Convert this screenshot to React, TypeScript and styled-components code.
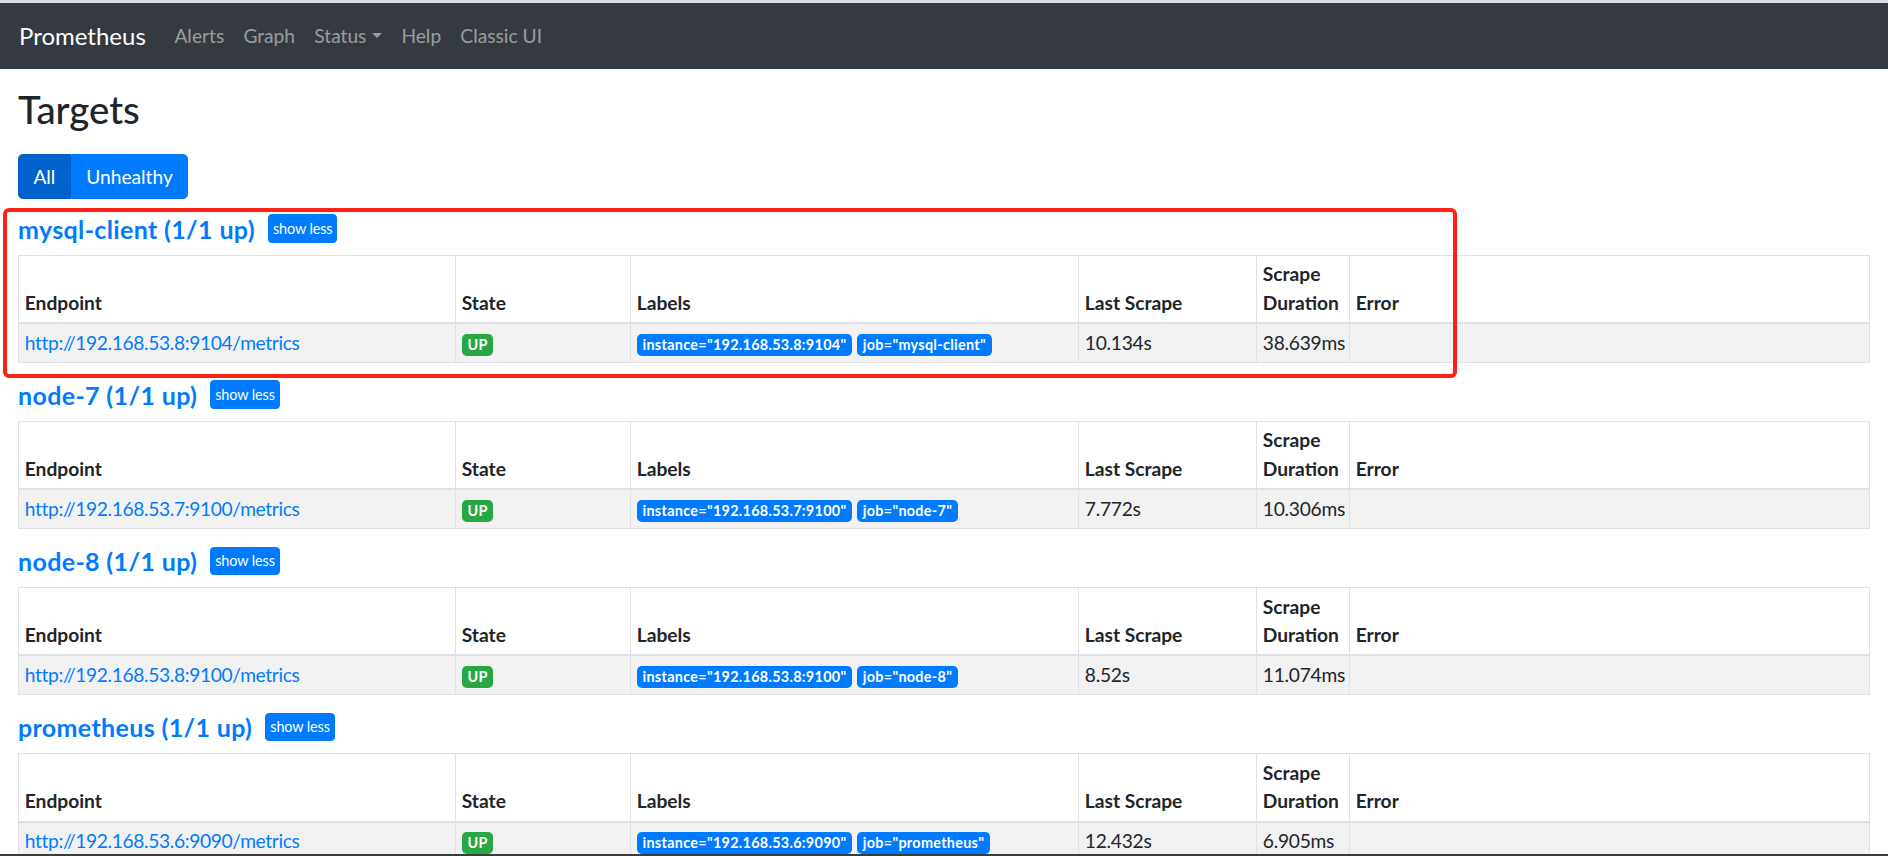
import React from "react";
import styled, { createGlobalStyle } from "styled-components";

const GlobalStyle = createGlobalStyle`
  *, *::before, *::after { box-sizing: border-box; }
  html, body { margin: 0; padding: 0; background: #fff; overflow: hidden; }
  body {
    font-family: "Segoe UI", Lato, "Noto Sans", sans-serif;
    font-size: 19.2px;
    line-height: 1.5;
    color: #212529;
  }
`;

const Page = styled.div`
  position: relative;
  min-height: 856px;
`;

const TopEdge = styled.div`
  height: 3px;
  background: #dcdee2;
`;

const Navbar = styled.nav`
  height: 66px;
  background: #343a40;
  display: flex;
  align-items: center;
  padding: 0 19px;
`;

const Brand = styled.a`
  font-size: 24px;
  color: #fff;
  margin-right: 19px;
  text-decoration: none;
  line-height: 1.5;
`;

const NavLink = styled.a`
  color: rgba(255, 255, 255, 0.5);
  padding: 0 9.6px;
  font-size: 19.2px;
  text-decoration: none;
  display: inline-flex;
  align-items: center;
`;

const Caret = styled.span`
  display: inline-block;
  margin-left: 0.3em;
  width: 0;
  height: 0;
  border-top: 0.3em solid rgba(255, 255, 255, 0.5);
  border-left: 0.3em solid transparent;
  border-right: 0.3em solid transparent;
`;

const Main = styled.main`
  padding: 0 18px;
`;

const Title = styled.h2`
  margin: 17px 0 22px;
  font-size: 38.4px;
  font-weight: 500;
  line-height: 1.2;
`;

const ButtonGroup = styled.div`
  display: inline-flex;
  margin-bottom: 15px;
`;

const FilterButton = styled.button<{ $active?: boolean; $first?: boolean }>`
  height: 45px;
  padding: 0 14.4px;
  font-family: inherit;
  font-size: 19.2px;
  color: #fff;
  background: ${(p) => (p.$active ? "#0062cc" : "#007bff")};
  border: 1px solid ${(p) => (p.$active ? "#005cbf" : "#007bff")};
  border-radius: ${(p) => (p.$first ? "4.8px 0 0 4.8px" : "0 4.8px 4.8px 0")};
  cursor: pointer;
`;

const Pools = styled.div`
  display: block;
`;

const PoolHeader = styled.h3`
  display: flex;
  align-items: center;
  height: 31px;
  margin: -1px 0 11px;
  font-size: 25px;
  font-weight: 700;
  letter-spacing: 0.35px;
  line-height: 1.2;
`;

const PoolLink = styled.a`
  color: #007bff;
  text-decoration: none;
`;

const SmallButton = styled.button`
  margin-left: 13px;
  padding: 2.4px 4px;
  font-family: inherit;
  font-size: 14.4px;
  letter-spacing: -0.1px;
  line-height: 1.5;
  color: #fff;
  background: #007bff;
  border: 1px solid #007bff;
  border-radius: 3.8px;
  cursor: pointer;
`;

const Table = styled.table`
  width: 100%;
  border-collapse: collapse;
  table-layout: fixed;
  margin-bottom: 17.5px;
`;

const Th = styled.th`
  border: 1px solid #dee2e6;
  border-bottom-width: 2px;
  padding: 4.3px 5.76px;
  vertical-align: bottom;
  text-align: left;
  font-weight: 700;
  line-height: 1.5;
`;

const Td = styled.td`
  border: 1px solid #dee2e6;
  padding: 4.3px 5.76px;
  vertical-align: top;
  background: #f2f2f2;
  line-height: 1.5;
  letter-spacing: -0.25px;
`;

const EndpointLink = styled.a`
  color: #007bff;
  text-decoration: none;
  letter-spacing: -0.35px;
`;

const Badge = styled.span<{ $color: string }>`
  display: inline-block;
  padding: 0.25em 0.4em;
  margin-right: 4.8px;
  font-size: 14.4px;
  font-weight: 700;
  letter-spacing: 0.3px;
  line-height: 1;
  color: #fff;
  white-space: nowrap;
  vertical-align: baseline;
  border-radius: 4.8px;
  background: ${(p) => p.$color};
`;

const Annotation = styled.div`
  position: absolute;
  left: 3px;
  top: 208px;
  width: 1454px;
  height: 170px;
  border: 4.5px solid #ff2116;
  border-radius: 6px;
  pointer-events: none;
`;

const BottomEdge = styled.div`
  position: fixed;
  left: 0;
  right: 0;
  bottom: 0;
  height: 2px;
  background: #3c3c3c;
`;

type Pool = {
  name: string;
  url: string;
  instance: string;
  last: string;
  duration: string;
};

const pools: Pool[] = [
  { name: "mysql-client", url: "http://192.168.53.8:9104/metrics", instance: "192.168.53.8:9104", last: "10.134s", duration: "38.639ms" },
  { name: "node-7", url: "http://192.168.53.7:9100/metrics", instance: "192.168.53.7:9100", last: "7.772s", duration: "10.306ms" },
  { name: "node-8", url: "http://192.168.53.8:9100/metrics", instance: "192.168.53.8:9100", last: "8.52s", duration: "11.074ms" },
  { name: "prometheus", url: "http://192.168.53.6:9090/metrics", instance: "192.168.53.6:9090", last: "12.432s", duration: "6.905ms" },
];

const colWidths = [437, 175, 448, 178, 93];

function PoolPanel({ pool }: { pool: Pool }) {
  return (
    <section>
      <PoolHeader>
        <PoolLink href={`#${pool.name}`}>{`${pool.name} (1/1 up)`}</PoolLink>
        <SmallButton>show less</SmallButton>
      </PoolHeader>
      <Table>
        <colgroup>
          {colWidths.map((w, i) => (
            <col key={i} style={{ width: w }} />
          ))}
          <col />
        </colgroup>
        <thead>
          <tr>
            <Th>Endpoint</Th>
            <Th>State</Th>
            <Th>Labels</Th>
            <Th>Last Scrape</Th>
            <Th>Scrape Duration</Th>
            <Th>Error</Th>
          </tr>
        </thead>
        <tbody>
          <tr>
            <Td>
              <EndpointLink href={pool.url}>{pool.url}</EndpointLink>
            </Td>
            <Td>
              <Badge $color="#28a745">UP</Badge>
            </Td>
            <Td>
              <Badge $color="#007bff">{`instance="${pool.instance}"`}</Badge>
              <Badge $color="#007bff">{`job="${pool.name}"`}</Badge>
            </Td>
            <Td>{pool.last}</Td>
            <Td>{pool.duration}</Td>
            <Td />
          </tr>
        </tbody>
      </Table>
    </section>
  );
}

export default function App() {
  return (
    <Page>
      <GlobalStyle />
      <TopEdge />
      <Navbar>
        <Brand href="#">Prometheus</Brand>
        <NavLink href="#">Alerts</NavLink>
        <NavLink href="#">Graph</NavLink>
        <NavLink href="#">
          Status
          <Caret />
        </NavLink>
        <NavLink href="#">Help</NavLink>
        <NavLink href="#">Classic UI</NavLink>
      </Navbar>
      <Main>
        <Title>Targets</Title>
        <ButtonGroup>
          <FilterButton $active $first>
            All
          </FilterButton>
          <FilterButton>Unhealthy</FilterButton>
        </ButtonGroup>
        <Pools>
          {pools.map((p) => (
            <PoolPanel key={p.name} pool={p} />
          ))}
        </Pools>
      </Main>
      <Annotation />
      <BottomEdge />
    </Page>
  );
}
